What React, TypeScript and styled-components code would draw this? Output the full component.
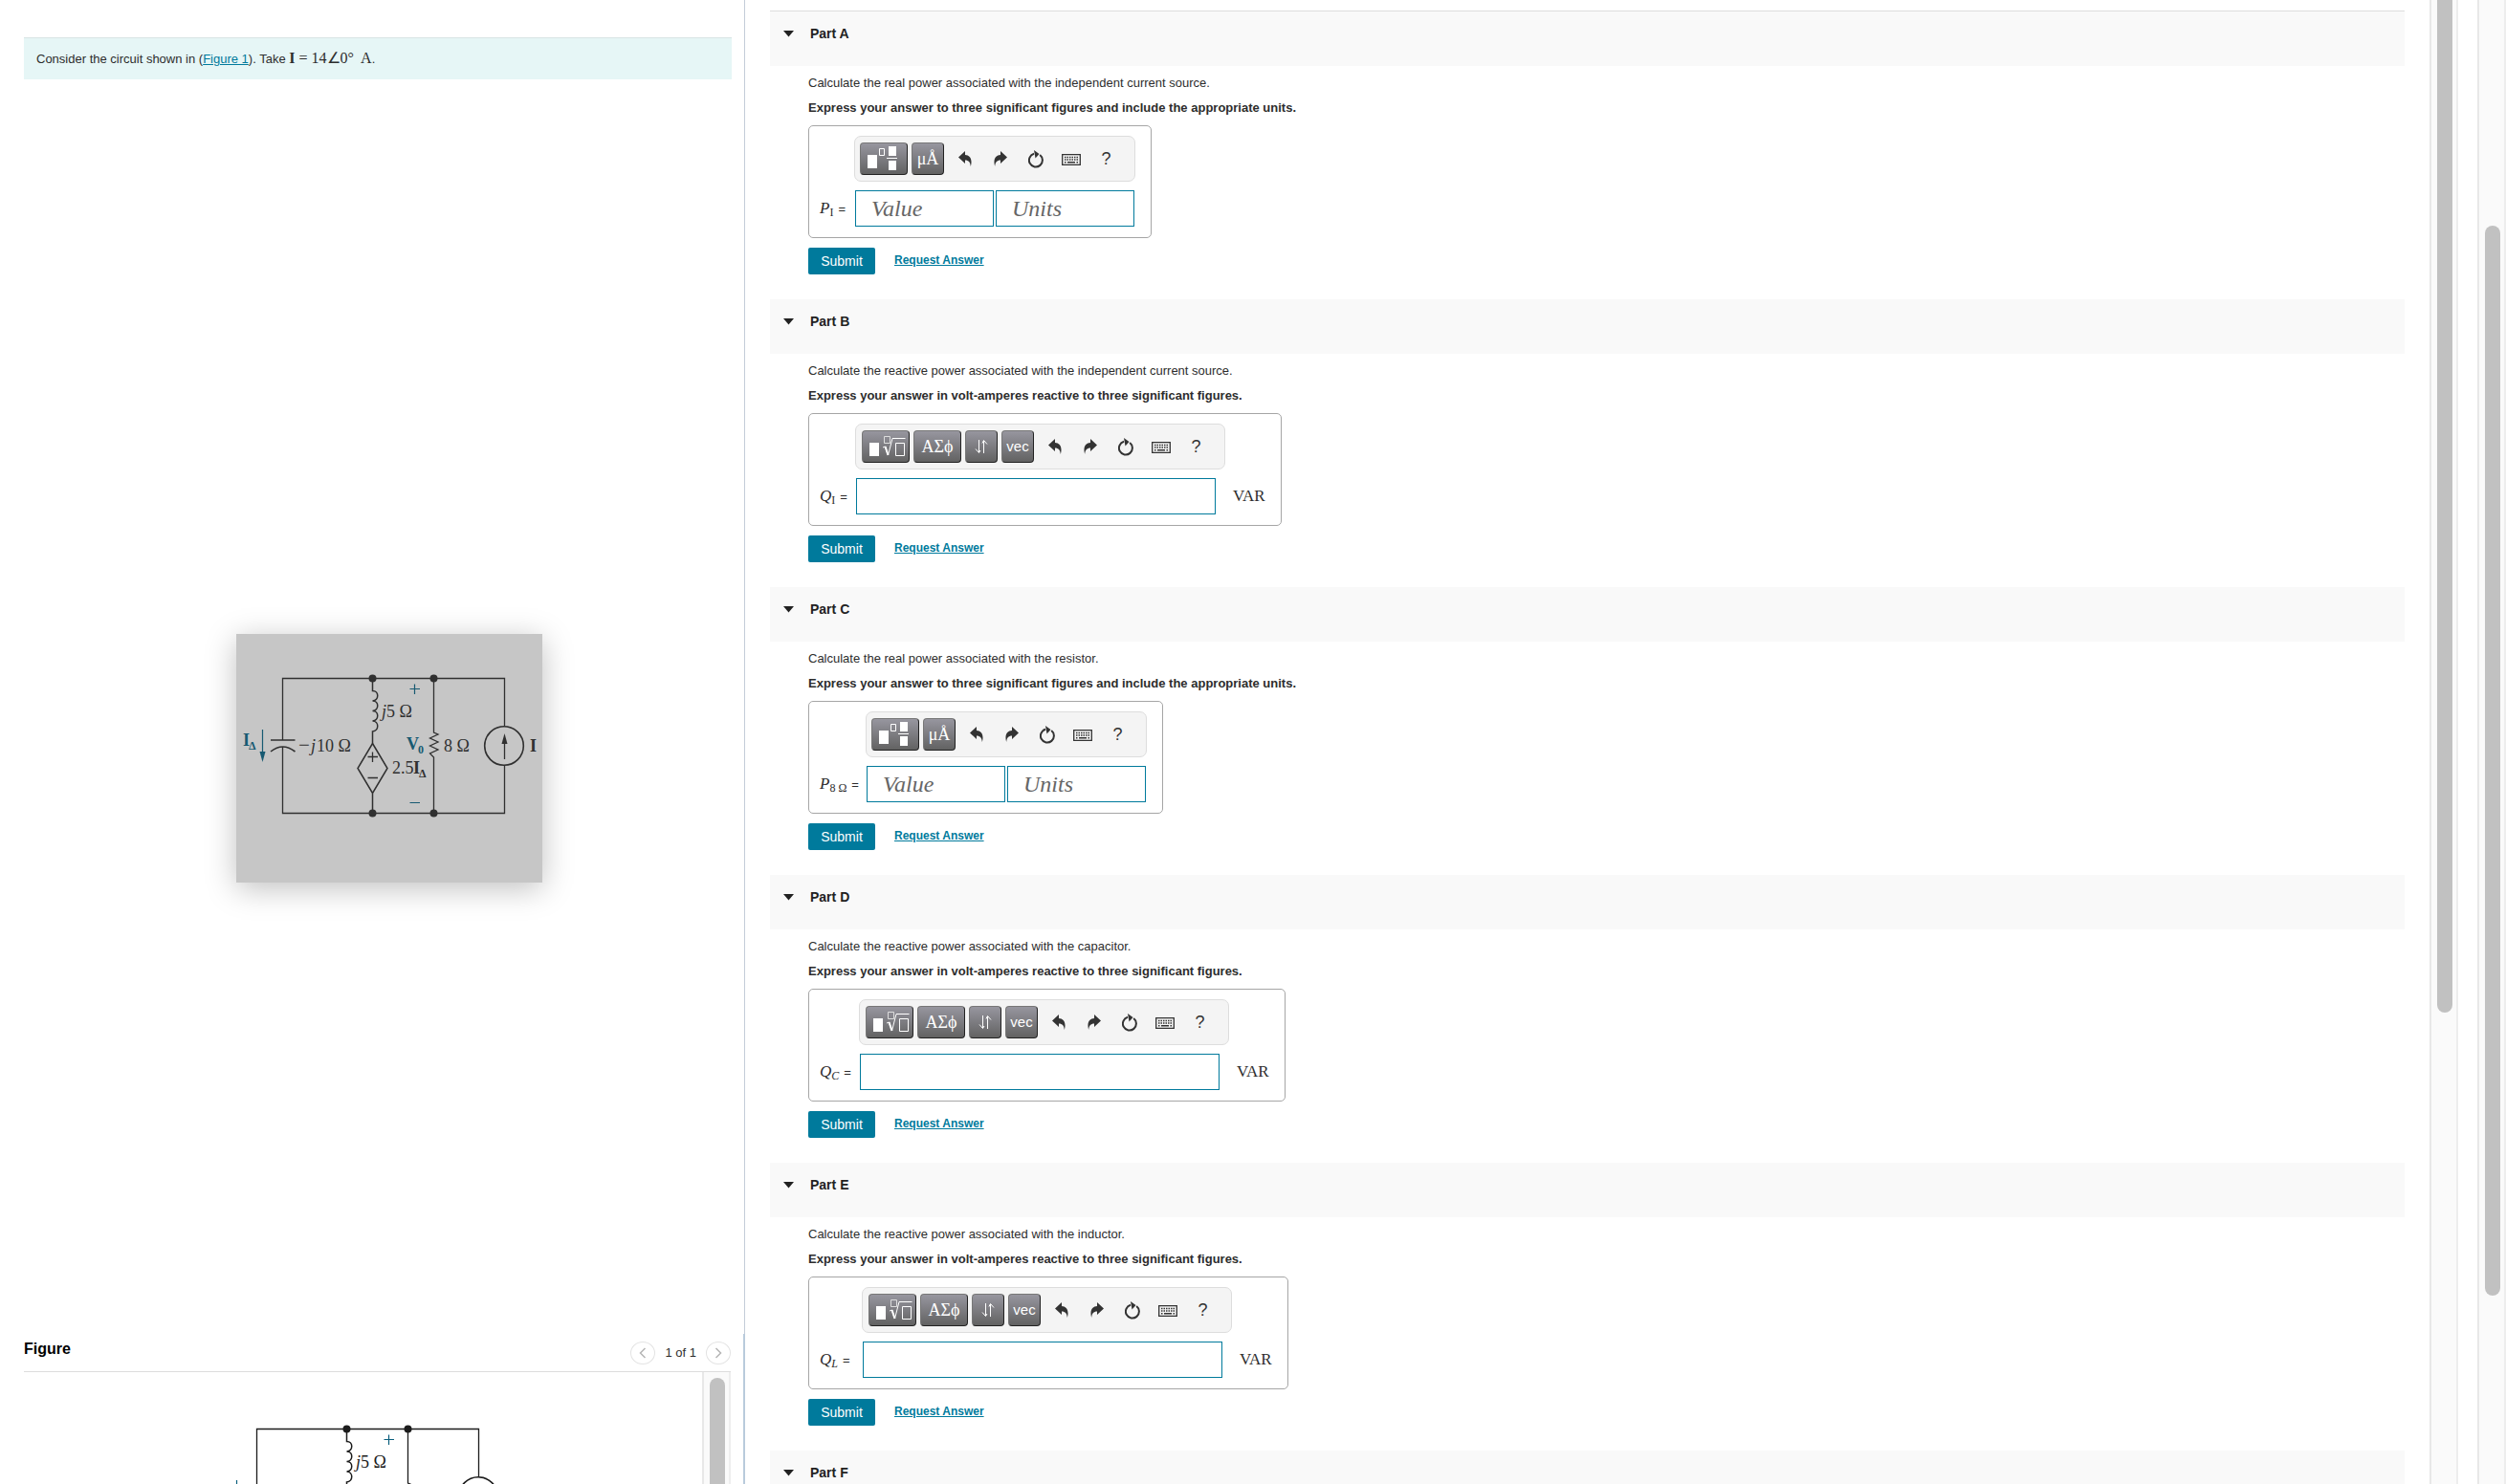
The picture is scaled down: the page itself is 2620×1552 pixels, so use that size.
import React from "react";
import styled, { createGlobalStyle } from "styled-components";

const sans = `"Liberation Sans", Arial, Helvetica, sans-serif`;
const serif = `"Liberation Serif", "Times New Roman", serif`;

const GlobalStyle = createGlobalStyle`
  * { box-sizing: border-box; }
  body { margin: 0; background: #fff; color: #2d2d2d; font: 13px/20px ${sans}; overflow: hidden; }
  p, h2, h3 { margin: 0; }
  button, input { font: inherit; color: inherit; margin: 0; padding: 0; }
  svg { display: block; }
`;

const Page = styled.div`
  display: flex;
  height: 100vh;
`;

const Workspace = styled.main`
  flex: 1;
  display: flex;
  min-width: 0;
`;

const LeftPane = styled.div`
  flex: 0 0 calc(30% + 2px);
  display: flex;
  flex-direction: column;
  min-height: 0;
`;

const ProblemArea = styled.section`
  flex: 1;
  padding: 39px 13px 0 25px;
  border-right: 1px solid #c3ccd8;
`;

const Problem = styled.p`
  padding: 12px 13px 11px;
  border-top: 1px solid #d8e4e4;
  background: #e6f6f6;
`;

const Link = styled.a`
  color: #007a9c;
  text-decoration: underline;
`;

const RequestLink = styled(Link)`
  padding-bottom: 2px;
  font-size: 12px;
  font-weight: bold;
`;

const Math = styled.span`
  font-family: ${serif};
  font-size: 16px;
  line-height: 16px;
`;

const FigureArea = styled.section`
  flex: 0 0 157px;
  display: flex;
  flex-direction: column;
  min-height: 0;
  overflow: hidden;
  padding: 0 13px 0 25px;
  border-right: 2px solid #b9cbdc;
`;

const FigureHeader = styled.header`
  flex: none;
  display: flex;
  align-items: center;
  justify-content: space-between;
  height: 40px;
  border-bottom: 1px solid #ddd;
`;

const FigureTitle = styled.h2`
  font-size: 16px;
  line-height: 24px;
  padding-bottom: 8px;
  color: #000;
`;

const Pager = styled.nav`
  display: flex;
  align-items: center;
  gap: 10px;
`;

const PagerButton = styled.button`
  display: grid;
  place-items: center;
  width: 26px;
  height: 24px;
  border: 1px solid #e3e3e3;
  border-radius: 50%;
  background: #fff;
`;

const FigureBody = styled.div`
  flex: 1;
  display: flex;
  min-height: 0;
  overflow: hidden;
`;

const FigureCanvas = styled.div`
  flex: 1;
  display: flex;
  justify-content: center;
  padding-top: 13px;
`;

const DragGhost = styled.div`
  position: absolute;
  left: 247px;
  top: 663px;
  background: #c6c6c6;
  box-shadow: 0 6px 30px rgba(0, 0, 0, 0.25);
`;

const RightPane = styled.div`
  flex: 1;
  min-width: 0;
  overflow: hidden;
  padding: 11px 26px 0;
`;

const PartHeader = styled.header<{ $first?: boolean }>`
  display: flex;
  gap: 17px;
  padding: 13px 14px 24px;
  background: #f9f9f9;
  border-top: ${(p) => (p.$first ? "1px solid #ddd" : "0")};
`;

const Toggle = styled.button`
  width: 11px;
  height: 20px;
  border: 0;
  background: none;
`;

const PartTitle = styled.h3`
  font-size: 14px;
  line-height: 20px;
  color: #222;
`;

const PartBody = styled.div`
  display: flex;
  flex-direction: column;
  align-items: flex-start;
  padding: 8px 40px 26px;
`;

const Instruction = styled.p`
  padding: 6px 0 8px;
  font-weight: bold;
`;

const AnswerBox = styled.div`
  display: grid;
  grid-template-columns: auto auto auto;
  row-gap: 9px;
  padding: 10px 16px 11px 11px;
  border: 1px solid #a6a6a6;
  border-radius: 5px;
`;

const Toolbar = styled.div<{ $roomy?: boolean }>`
  grid-column: 2 / 4;
  justify-self: start;
  display: flex;
  align-items: center;
  gap: 4px;
  height: 48px;
  margin-left: -1px;
  padding: 0 11px 0 ${(p) => (p.$roomy ? 6 : 5)}px;
  border: 1px solid #ddd;
  border-radius: 7px;
  background: #f4f4f4;
`;

const ToolButton = styled.button<{ $wide?: boolean }>`
  display: grid;
  place-items: center;
  width: ${(p) => (p.$wide ? 50 : 34)}px;
  height: 34px;
  border: 1px solid;
  border-color: #777 #222 #222 #777;
  border-radius: 4px;
  background: linear-gradient(#97969f, #626262);
  color: #fff;
`;

const ToolText = styled.span<{ $serif?: boolean }>`
  font-family: ${(p) => (p.$serif ? serif : sans)};
  font-size: ${(p) => (p.$serif ? 18 : 15)}px;
  line-height: 20px;
`;

const IconGroup = styled.div`
  display: flex;
  margin-left: -1px;
`;

const IconButton = styled.button`
  display: grid;
  place-items: center;
  width: 37px;
  height: 34px;
  border: 0;
  background: none;
  color: #333;
  font-size: 18px;
`;

const VarLabel = styled.label<{ $width: number }>`
  width: ${(p) => p.$width}px;
  padding-top: 1px;
  align-self: center;
  white-space: nowrap;
  font-family: ${serif};
  font-size: 17px;
`;

const Sub = styled.span`
  position: relative;
  top: 3px;
  font-size: 12px;
`;

const Equals = styled.span`
  margin-left: 5px;
  font-family: ${sans};
  font-size: 13px;
`;

const Fields = styled.div`
  display: flex;
  gap: 2px;
`;

const Field = styled.input<{ $long?: boolean }>`
  width: ${(p) => (p.$long ? 376 : 145)}px;
  height: 38px;
  padding: 0 16px;
  border: 1px solid #007a9c;
  background: #fff;
  font-family: ${serif};
  font-size: 24px;
  font-style: italic;
  &::placeholder { color: #666; opacity: 1; }
`;

const Unit = styled.span`
  align-self: center;
  padding-left: 18px;
  font-family: ${serif};
  font-size: 17px;
`;

const Actions = styled.div`
  display: flex;
  align-items: center;
  gap: 20px;
  margin-top: 10px;
`;

const Submit = styled.button`
  width: 70px;
  height: 28px;
  border: 0;
  border-radius: 2px;
  background: #007a9c;
  color: #fff;
  font-size: 14px;
`;

const Track = styled.div`
  flex: 0 0 30px;
  display: flex;
  flex-direction: column;
  padding: 0 4px 0 6px;
  border-left: 2px solid #e8e8e8;
  border-right: 2px solid #ededed;
  background: #fafafa;
`;

const TrackSpace = styled.div<{ $span: number }>`
  flex: ${(p) => p.$span} 0 0;
`;

const Thumb = styled.div<{ $span: number; $cut?: "top" | "bottom" }>`
  flex: ${(p) => p.$span} 0 0;
  border-radius: ${(p) =>
    p.$cut === "top" ? "0 0 8px 8px" : p.$cut === "bottom" ? "8px 8px 0 0" : "8px"};
  background: #c1c1c1;
`;

const Gutter = styled.div`
  flex: 0 0 20px;
`;

function Circuit({ ink, accent }: { ink: string; accent: string }) {
  const bold = { fontWeight: "bold" as const };
  return (
    <svg width="320" height="260" viewBox="0 0 320 260" role="img" aria-label="Circuit diagram" fontFamily={serif} fontSize="18" fill={ink}>
      <g fill="none" stroke={ink} strokeWidth="1.3">
        <path d="M48.5 111V46.5H280.5V96M280.5 137V187.5H48.5V118" />
        <path d="M36 111H61.5M36 123Q48.5 113 61.5 123" strokeWidth="1.6" />
        <path d="M142.5 46.5V59.5C149.5 59.5 149.5 69.5 142.5 70C149.5 70 149.5 80 142.5 80.5C149.5 80.5 149.5 90.5 142.5 91C149.5 91 149.5 101.5 142.5 102V114.5" strokeWidth="1.5" />
        <path d="M142.5 114.5L158 140.5L142.5 166.5L127 140.5ZM142.5 166.5V187.5" strokeWidth="1.5" />
        <path d="M137.5 128.5H148M142.5 123.5V134M137.5 150.5H148" />
        <path d="M206.5 46.5V103L211 105L202.5 109L211 113L202.5 117L211 121L202.5 125L206.5 129V187.5" />
        <circle cx="280" cy="117" r="20.3" strokeWidth="1.6" />
        <path d="M280.5 131V112" />
      </g>
      <path d="M280.5 104L283.5 115H277.5Z" />
      <circle cx="142.5" cy="46.5" r="4" />
      <circle cx="206.5" cy="46.5" r="4" />
      <circle cx="142.5" cy="187.5" r="4" />
      <circle cx="206.5" cy="187.5" r="4" />
      <path d="M27.5 100V125M181.5 57.5H192M186.5 52.5V63M181.5 176.5H192" stroke={accent} strokeWidth="1.2" />
      <path d="M27.5 134L24.5 123H30.5Z" fill={accent} />
      <text x="7" y="117" fill={accent} style={bold}>I</text>
      <text x="13" y="121" fontSize="12" fill={accent} style={bold}>Δ</text>
      <text x="65" y="123" fontSize="21">−</text>
      <text x="78" y="123" fontStyle="italic">j</text>
      <text x="84" y="123">10 Ω</text>
      <text x="152" y="87" fontStyle="italic">j</text>
      <text x="157" y="87">5 Ω</text>
      <text x="178" y="121" fill={accent} style={bold}>V</text>
      <text x="190" y="125" fontSize="12" fill={accent} style={bold}>0</text>
      <text x="217" y="123">8 Ω</text>
      <text x="163" y="146">2.5</text>
      <text x="185" y="146" style={bold}>I</text>
      <text x="191" y="150" fontSize="12" style={bold}>Δ</text>
      <text x="307" y="123" style={bold}>I</text>
    </svg>
  );
}

const Chevron = ({ right }: { right?: boolean }) => (
  <svg width="8" height="12" viewBox="0 0 8 12" fill="none" stroke="#b5b5b5" strokeWidth="1.5">
    <path d={right ? "M1.5 1L6.5 6L1.5 11" : "M6.5 1L1.5 6L6.5 11"} />
  </svg>
);

const Caret = () => (
  <svg width="11" height="18" viewBox="0 0 11 18">
    <path d="M0 6H11L5.5 12.5Z" fill="#222" />
  </svg>
);

const FractionIcon = () => (
  <svg width="48" height="32" viewBox="0 0 48 32" fill="#fff">
    <path d="M7 12H17V26H7ZM29 3H37V13H29ZM27 15H38V16H27ZM29 18H37V28H29Z" />
    <path d="M19.5 5.5H24.5V12.5H19.5Z" fill="none" stroke="#fff" />
  </svg>
);

const RootIcon = () => (
  <svg width="48" height="32" viewBox="0 0 48 32" fill="none" stroke="#fff">
    <path d="M7 12H17V26H7Z" fill="#fff" stroke="none" />
    <path d="M22.5 5.5H28.5V12.5H22.5Z" stroke="#ddd" />
    <path d="M34.5 12.5H43.5V25.5H34.5Z" />
    <path d="M21 17L23.5 16L26.5 25L31 7.5H44.5" />
    <path d="M23.5 16L26.5 25" strokeWidth="2" />
  </svg>
);

const UpDownIcon = () => (
  <svg width="14" height="16" viewBox="0 0 14 16" fill="none" stroke="#fff">
    <path d="M4.5 1V14M1 10.5L4.5 14.5L6 12M9.5 15V2M8 4.5L9.5 1.5L13 5.5" />
  </svg>
);

const BendArrow = ({ flip }: { flip?: boolean }) => (
  <svg width="14" height="16" viewBox="0 0 14 16" fill="currentColor">
    <g transform={flip ? "matrix(-1 0 0 1 14 0)" : undefined}>
      <path d="M0 6.5L7 0V4C12 4.2 15 8.5 12.8 16C12.5 11.5 10.5 9.6 7 9.5V13Z" />
    </g>
  </svg>
);

const ResetIcon = () => (
  <svg width="16" height="19" viewBox="0 0 16 19" fill="none" stroke="currentColor" strokeWidth="2">
    <path d="M12.2 5A7 7 0 1 1 6 3.8" />
    <path d="M6 0L11.5 4L7.5 8.5Z" fill="currentColor" stroke="none" />
  </svg>
);

const KeyboardIcon = () => (
  <svg width="20" height="16" viewBox="0 0 20 16" fill="none" stroke="currentColor">
    <path d="M.7 3.7H19.3V14.3H.7Z" strokeWidth="1.3" />
    <path d="M3 6.5H17M3 9H17" strokeWidth="1.4" strokeDasharray="1.5 1" />
    <path d="M3 11.7H4.5M6 11.7H14M15.5 11.7H17" strokeWidth="1.6" />
  </svg>
);

type Part = {
  id: string;
  prompt: string;
  kind: "units" | "expression";
  symbol: React.ReactNode;
  labelWidth: number;
};

const parts: Part[] = [
  { id: "A", kind: "units", labelWidth: 37, prompt: "Calculate the real power associated with the independent current source.", symbol: <><i>P</i><Sub>I</Sub></> },
  { id: "B", kind: "expression", labelWidth: 38, prompt: "Calculate the reactive power associated with the independent current source.", symbol: <><i>Q</i><Sub>I</Sub></> },
  { id: "C", kind: "units", labelWidth: 49, prompt: "Calculate the real power associated with the resistor.", symbol: <><i>P</i><Sub>8 Ω</Sub></> },
  { id: "D", kind: "expression", labelWidth: 42, prompt: "Calculate the reactive power associated with the capacitor.", symbol: <><i>Q</i><Sub><i>C</i></Sub></> },
  { id: "E", kind: "expression", labelWidth: 45, prompt: "Calculate the reactive power associated with the inductor.", symbol: <><i>Q</i><Sub><i>L</i></Sub></> },
];

const PartHeading = ({ id, first }: { id: string; first?: boolean }) => (
  <PartHeader $first={first}>
    <Toggle aria-label={`Toggle part ${id}`}><Caret /></Toggle>
    <PartTitle>Part {id}</PartTitle>
  </PartHeader>
);

function PartSection({ part, first }: { part: Part; first: boolean }) {
  const units = part.kind === "units";
  const fieldId = `answer-${part.id}`;
  return (
    <section>
      <PartHeading id={part.id} first={first} />
      <PartBody>
        <p>{part.prompt}</p>
        <Instruction>
          {units
            ? "Express your answer to three significant figures and include the appropriate units."
            : "Express your answer in volt-amperes reactive to three significant figures."}
        </Instruction>
        <AnswerBox>
          <span />
          <Toolbar $roomy={!units}>
            {units ? (
              <>
                <ToolButton $wide aria-label="Templates"><FractionIcon /></ToolButton>
                <ToolButton><ToolText $serif>μÅ</ToolText></ToolButton>
              </>
            ) : (
              <>
                <ToolButton $wide aria-label="Templates"><RootIcon /></ToolButton>
                <ToolButton $wide><ToolText $serif>ΑΣϕ</ToolText></ToolButton>
                <ToolButton aria-label="Arrows"><UpDownIcon /></ToolButton>
                <ToolButton><ToolText>vec</ToolText></ToolButton>
              </>
            )}
            <IconGroup>
              <IconButton aria-label="Undo"><BendArrow /></IconButton>
              <IconButton aria-label="Redo"><BendArrow flip /></IconButton>
              <IconButton aria-label="Reset"><ResetIcon /></IconButton>
              <IconButton aria-label="Keyboard shortcuts"><KeyboardIcon /></IconButton>
              <IconButton>?</IconButton>
            </IconGroup>
          </Toolbar>
          <VarLabel htmlFor={fieldId} $width={part.labelWidth}>
            {part.symbol}<Equals>=</Equals>
          </VarLabel>
          <Fields>
            {units ? (
              <>
                <Field id={fieldId} placeholder="Value" />
                <Field aria-label="Units" placeholder="Units" />
              </>
            ) : (
              <Field id={fieldId} $long />
            )}
          </Fields>
          {units ? <span /> : <Unit>VAR</Unit>}
        </AnswerBox>
        <Actions>
          <Submit>Submit</Submit>
          <RequestLink href="#">Request Answer</RequestLink>
        </Actions>
      </PartBody>
    </section>
  );
}

export default function App() {
  return (
    <>
      <GlobalStyle />
      <Page>
        <Workspace>
          <LeftPane>
            <ProblemArea>
              <Problem>
                Consider the circuit shown in (<Link href="#figure">Figure 1</Link>). Take{" "}
                <Math><b>I</b> = 14∠0°&nbsp;&thinsp;A</Math>.
              </Problem>
            </ProblemArea>
            <FigureArea id="figure">
              <FigureHeader>
                <FigureTitle>Figure</FigureTitle>
                <Pager>
                  <PagerButton aria-label="Previous figure"><Chevron /></PagerButton>
                  <span>1 of 1</span>
                  <PagerButton aria-label="Next figure"><Chevron right /></PagerButton>
                </Pager>
              </FigureHeader>
              <FigureBody>
                <FigureCanvas><Circuit ink="#1c1c1c" accent="#0b5f7e" /></FigureCanvas>
                <Track>
                  <TrackSpace $span={6} />
                  <Thumb $span={111} $cut="bottom" />
                </Track>
              </FigureBody>
            </FigureArea>
          </LeftPane>
          <RightPane>
            {parts.map((part, i) => (
              <PartSection key={part.id} part={part} first={i === 0} />
            ))}
            <PartHeading id="F" />
          </RightPane>
          <Track>
            <Thumb $span={1059} $cut="top" />
            <TrackSpace $span={493} />
          </Track>
          <Gutter />
        </Workspace>
        <Track>
          <TrackSpace $span={236} />
          <Thumb $span={1119} />
          <TrackSpace $span={197} />
        </Track>
      </Page>
      <DragGhost>
        <Circuit ink="#303030" accent="#175a72" />
      </DragGhost>
    </>
  );
}
